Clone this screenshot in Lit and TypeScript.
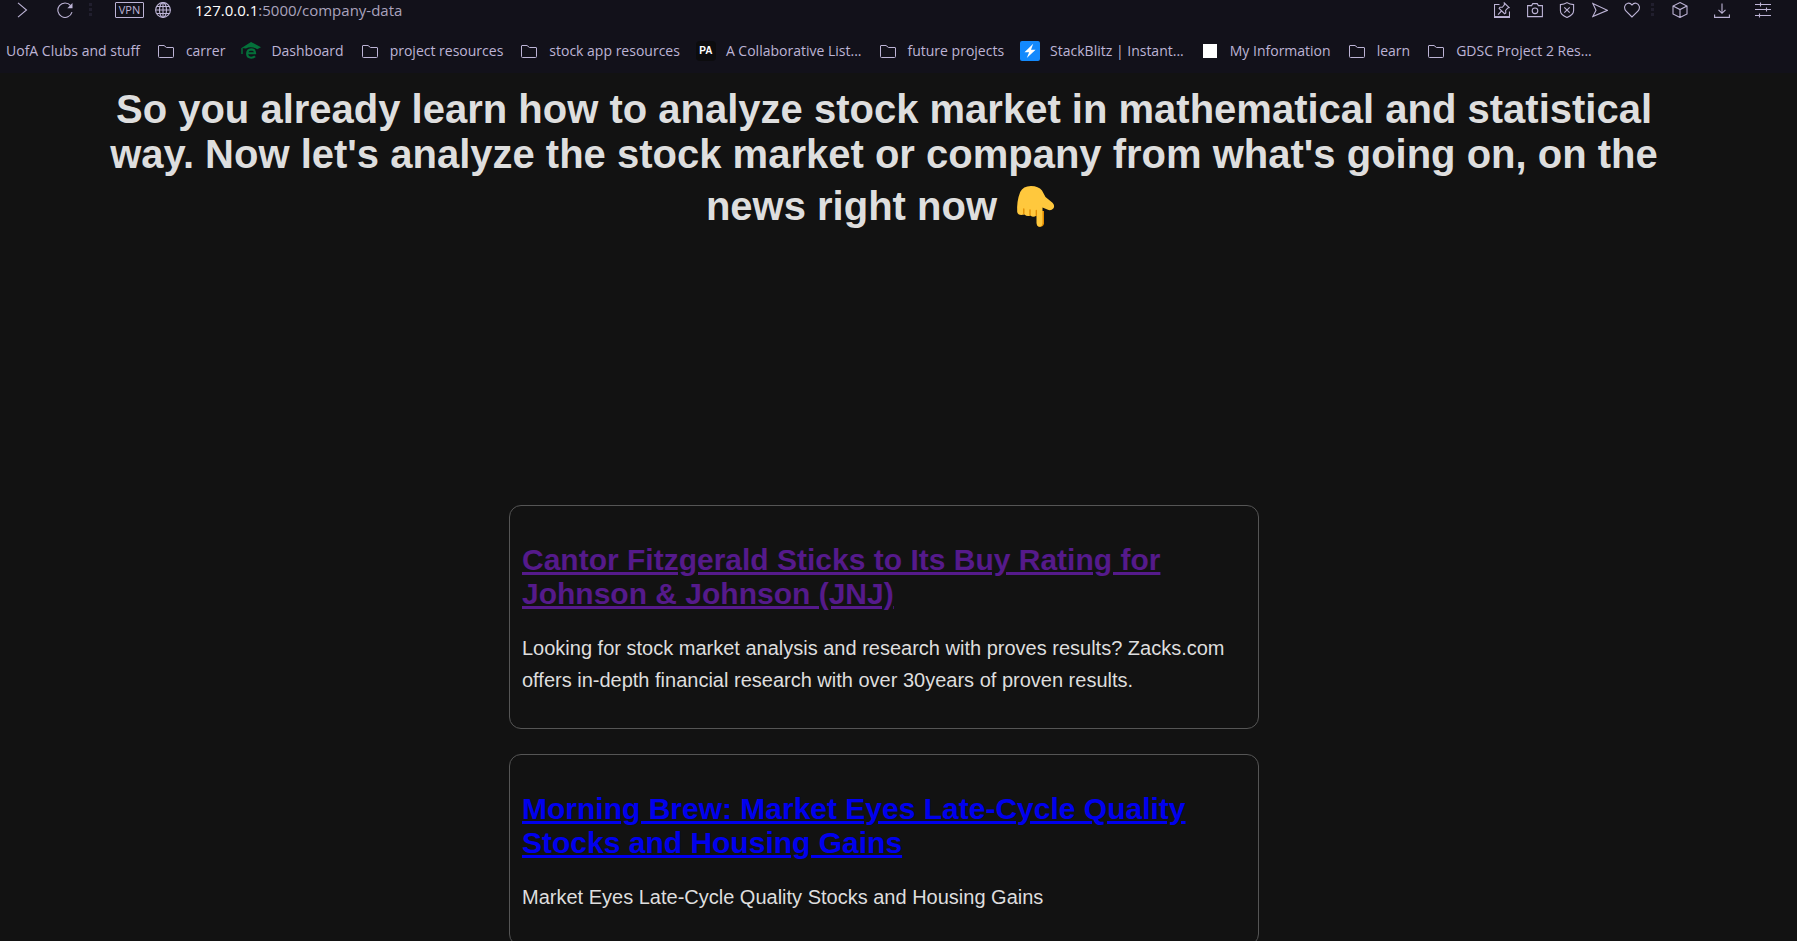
import { LitElement, html, css, svg, TemplateResult } from "lit";
import { customElement, property } from "lit/decorators.js";

const stroke = (body: TemplateResult, size = 16) => html`
  <svg width=${size} height=${size} viewBox="0 0 16 16" fill="none" stroke="currentColor"
    stroke-width="1.1" aria-hidden="true">${body}</svg>`;

const icons: Record<string, TemplateResult> = {
  forward: stroke(svg`<path d="M4 .8 12.5 8 4 15.2"/>`),
  reload: stroke(svg`<path d="M15 10.2A7.2 7.2 0 1 1 13.6 3.6"/><path d="M15.5 1v5.3h-5.2z" fill="currentColor" stroke="none"/>`),
  globe: stroke(svg`<circle cx="8" cy="8" r="7.4"/><ellipse cx="8" cy="8" rx="3.5" ry="7.4"/><path d="M8 .6v14.8M1.8 4.500h12.400M1.800 11.500h12.400M.6 8h14.8"/>`),
  pin: stroke(svg`<path d="M5.5 2.5h-5v13h15v-6"/><path d="m10.3 1 4.8 4.6-1.5.5-2 2.3.2 2.5-1.2.8-5.5-5.3.8-1.2 2.5.1 2-2.4zM7.5 9 4 12.6"/><path d="M.5 14.6h15"/>`),
  camera: stroke(svg`<path d="M.6 3.6h4l1.2-2h4.4l1.2 2h4v11H.6z"/><circle cx="8" cy="8.8" r="2.8"/>`),
  shield: stroke(svg`<path d="M8 .6c2 1.3 4.200 1.900 6.600 2v6c0 3.200-2.700 5.400-6.600 6.900C4.100 14 1.400 11.800 1.400 8.600v-6C3.800 2.500 6 1.900 8 .6z"/><path d="m5.300 5.300 5.400 5.400m0-5.400-5.400 5.400"/>`),
  send: stroke(svg`<path d="m.8 1.400 14.600 6.900L.8 14.600 4 8.300z"/>`),
  heart: stroke(svg`<path d="M8 15 2.100 9.200C.7 7.800.4 5.800.7 4.300 1.500 1 5.700-.2 8 3c2.300-3.200 6.500-2 7.300 1.300.3 1.500 0 3.500-1.400 4.900z"/>`),
  cube: stroke(svg`<path d="m8 .6 7 3.400v8l-7 3.500L1 12V4zM1 4l7 3.600L15 4M8 7.600v7.900"/>`),
  download: stroke(svg`<path d="M8 1.500v9.500M4.500 7.800 8 11.300l3.500-3.500M.6 12.500v2.900h14.800v-2.900"/>`),
  sliders: stroke(svg`<path d="M0 2.500h16M0 7.500h16M0 13.500h16M5.500.5v4M11.500 5.500v4M4.500 11.500v4"/>`),
  folder: html`<svg width="20" height="16" viewBox="0 0 20 16" fill="none" stroke="currentColor" aria-hidden="true">
    <path d="M2.500 13V3q0-.5.5-.5h5l2.500 2H17q.5 0 .5.5v8.500q0 1-1 1h-13q-1 0-1-1z"/></svg>`,
  grad: html`<svg width="20" height="20" viewBox="0 0 20 20" aria-hidden="true">
    <path d="M10 1 20 6.200l-3.800 2Q10 4.600 5 7.400L.5 7z" fill="#04713a"/>
    <path d="M1 7v6" stroke="#04713a" stroke-width="1.400"/>
    <path d="M6.200 12.300h7.900q0-3.900-3.900-3.900-4 .2-4.100 4.400.1 3.800 4.200 3.900 2.300 0 3.700-1.400" fill="none" stroke="#04713a" stroke-width="2.100"/></svg>`,
  bolt: html`<svg width="20" height="20" viewBox="0 0 20 20" aria-hidden="true">
    <rect width="20" height="20" rx="2" fill="#1389fd"/><path d="M13.200 2.800 4.500 11.300h4.600L6.800 17l8.800-8.300H11z" fill="#fff"/></svg>`,
  square: html`<svg width="20" height="20" viewBox="0 0 20 20" aria-hidden="true"><path d="M3 3h14v14H3z" fill="#fff"/></svg>`,
  pa: html`<span class="pa" aria-hidden="true">PA</span>`,
};

const bookmarks: [string, string][] = [
  ["", "UofA Clubs and stuff"],
  ["folder", "carrer"],
  ["grad", "Dashboard"],
  ["folder", "project resources"],
  ["folder", "stock app resources"],
  ["pa", "A Collaborative List..."],
  ["folder", "future projects"],
  ["bolt", "StackBlitz | Instant..."],
  ["square", "My Information"],
  ["folder", "learn"],
  ["folder", "GDSC Project 2 Res..."],
];

@customElement("browser-bar")
class BrowserBar extends LitElement {
  static styles = css`
    :host { display: block; background: #12111a; color: #bdb4d6; font-family: "Open Sans", "Noto Sans", sans-serif; }
    svg { display: block; }
    button { display: block; padding: 0; border: 0; background: none; color: inherit; font: inherit; }
    .tools { display: flex; align-items: center; height: 19px; padding: 0 26px 0 14px; }
    .nav { display: flex; gap: 27px; }
    .dots { width: 3px; height: 13px; margin: 0 17px 0 16px; background: repeating-linear-gradient(#211f2e 0 3px, transparent 3px 5px); }
    .right-dots { margin: 0 18px 0 11px; }
    .vpn { margin: 0 11px 0 6px; width: 29px; height: 16px; box-sizing: border-box; border: 1px solid #bdb4d6; border-radius: 1px; font-size: 11px; line-height: 14px; }
    .url { flex: 1; min-width: 0; margin: 0 24px; color: #aaa3bd; font-size: 15px; line-height: 20px; text-decoration: none; }
    .host { color: #fff; }
    .page-tools { display: flex; justify-content: space-between; width: 146px; }
    .app-tools { display: flex; justify-content: space-between; width: 99px; }
    .marks { display: flex; gap: 16px; padding: 20px 6px 10px; overflow: hidden; }
    .mark { display: flex; align-items: center; gap: 10px; flex: none; height: 24px; color: inherit; font-size: 14px; line-height: 24px; text-decoration: none; white-space: nowrap; }
    .pa { width: 20px; height: 20px; border-radius: 4px; background: #0c0c0e; color: #fff; font: bold 10px/20px "Liberation Sans", sans-serif; text-align: center; }
  `;

  private tool(name: string, label: string) {
    return html`<button aria-label=${label}>${icons[name]}</button>`;
  }

  render() {
    return html`
      <div class="tools">
        <div class="nav">${this.tool("forward", "Forward")}${this.tool("reload", "Reload")}</div>
        <span class="dots"></span>
        <button class="vpn">VPN</button>
        ${this.tool("globe", "Site information")}
        <a class="url" href="#"><span class="host">127.0.0.1</span>:5000/company-data</a>
        <div class="page-tools">
          ${this.tool("pin", "Pinboard")}${this.tool("camera", "Snapshot")}${this.tool("shield", "Ad blocker")}
          ${this.tool("send", "Send")}${this.tool("heart", "Bookmark")}
        </div>
        <span class="dots right-dots"></span>
        <div class="app-tools">
          ${this.tool("cube", "Extensions")}${this.tool("download", "Downloads")}${this.tool("sliders", "Easy setup")}
        </div>
      </div>
      <nav class="marks" aria-label="Bookmarks">
        ${bookmarks.map(([icon, text]) => html`<a class="mark" href="#">${icon ? icons[icon] : ""}<span>${text}</span></a>`)}
      </nav>`;
  }
}

@customElement("news-card")
class NewsCard extends LitElement {
  @property() heading = "";
  @property() summary = "";
  @property({ type: Boolean }) read = false;

  static styles = css`
    :host { display: block; border: 1px solid #555; border-radius: 12px; padding: 37px 12px 32px; }
    h2 { margin: 0 0 21px; font-size: 30px; line-height: 34px; }
    .link { color: #0000ee; }
    .seen { color: #551a8b; }
    p { margin: 0; font-size: 20px; line-height: 32px; }
  `;

  render() {
    return html`
      <h2><a class=${this.read ? "link seen" : "link"} href="#">${this.heading}</a></h2>
      <p>${this.summary}</p>`;
  }
}

@customElement("app-root")
class AppRoot extends LitElement {
  static styles = css`
    :host { display: flex; flex-direction: column; height: 100vh; background: #121212; color: #dedede; font-family: "Liberation Sans", Arial, sans-serif; }
    main { flex: 1; min-height: 0; overflow-y: auto; scrollbar-width: none; padding: 14px 29px 25px 0; }
    h1 { margin: 0; padding: 0 80px; font-size: 40px; line-height: 45px; text-align: center; }
    .hand { width: 54px; height: 55px; vertical-align: -12px; }
    .news { display: grid; gap: 25px; max-width: 750px; margin: 273px auto 0; }
  `;

  render() {
    return html`
      <browser-bar></browser-bar>
      <main>
        <h1>
          So you already learn how to analyze stock market in mathematical and statistical way.
          Now let's analyze the stock market or company from what's going on, on the news right now
          <svg class="hand" viewBox="0 0 54 55" role="img" aria-label="Pointing down">
            <path d="M29 34h7v12.500q-.3 3-3.500 3.300-2 0-3-1.300z" fill="#e08a00"/>
            <path d="M9.200 35Q8.600 24 12.200 15 15 9 23 9q7.500 0 11 4.500L37.500 20l7 5.800q2.800 3 .8 5.800-2.300 2.500-6 1L34.500 30.500V46q-.2 3.500-3 3.800-2.700-.3-3-3.800v-7.500q-3.500 2.500-6 0-3.500 1.500-6-1-6.500 1.500-7.300-2.500z" fill="#ffc83d"/>
            <path d="M15.800 32v4.500M22 33v5M28.300 33.500v5" stroke="#e08a00" stroke-width="1.300" fill="none" stroke-linecap="round"/>
          </svg>
        </h1>
        <section class="news" aria-label="News">
          <news-card read heading="Cantor Fitzgerald Sticks to Its Buy Rating for Johnson & Johnson (JNJ)"
            summary="Looking for stock market analysis and research with proves results? Zacks.com offers in-depth financial research with over 30years of proven results."></news-card>
          <news-card heading="Morning Brew: Market Eyes Late-Cycle Quality Stocks and Housing Gains"
            summary="Market Eyes Late-Cycle Quality Stocks and Housing Gains"></news-card>
        </section>
      </main>`;
  }
}
